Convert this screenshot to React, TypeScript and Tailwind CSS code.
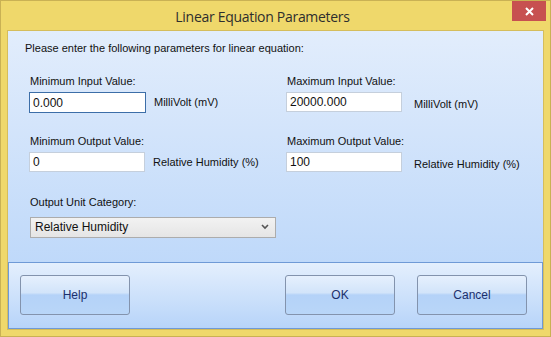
import React from "react";

const Field = ({ label, value, unit, focused, unitShift }: { label: string; value: string; unit: string; focused?: boolean; unitShift?: boolean }) => (
  <div className="flex flex-col">
    <span className="h-[13px] leading-[13px] pl-[1px]">{label}</span>
    <div className="mt-[4px] flex items-center">
      <div
        className={
          focused
            ? "w-[117px] h-[21px] bg-white border border-[#3c6ea8] flex items-center pl-[3px] text-[12px]"
            : "w-[116px] h-[20px] bg-white border border-[#c5cfdc] flex items-center pl-[3px] text-[12px]"
        }
      >
        {value}
      </div>
      <span className={unitShift ? "ml-[12px] mt-[4px]" : "ml-[8px]"}>{unit}</span>
    </div>
  </div>
);

const WinButton = ({ label }: { label: string }) => (
  <button className="w-[110px] h-[40px] rounded-[3px] border border-[#8393ad] bg-[linear-gradient(to_bottom,#e6f0fd_0%,#d2e4fa_44%,#b4d2f8_50%,#b9d6f8_100%)] text-[12px] text-[#1c2f6c]">
    {label}
  </button>
);

export default function App() {
  return (
    <div
      className="w-[551px] h-[337px] bg-[#efd86b] border border-[#c9b154] flex flex-col px-[6px] pb-[6px] text-[11px] text-[#111]"
      style={{ fontFamily: '"Liberation Sans", Arial, sans-serif' }}
    >
      {/* title bar */}
      <div className="relative h-[29px] flex items-center justify-center pr-[26px]">
        <span className="text-[14px] tracking-[-0.3px] text-[#2e2e2e] mt-[1px]" style={{ fontFamily: '"Open Sans", sans-serif' }}>
          Linear Equation Parameters
        </span>
        <div className="absolute top-0 right-[-2px] w-[34px] h-[20px] bg-[#c75050] flex items-center justify-center">
          <svg width="9" height="9" viewBox="0 0 9 9">
            <path d="M1 1 L8 8 M8 1 L1 8" stroke="#fff" strokeWidth="2" />
          </svg>
        </div>
      </div>

      {/* client */}
      <div className="flex-1 border border-[#d5bd5c] bg-[linear-gradient(to_bottom,#e2edfc,#b5d3f9)] flex flex-col">
        <div className="flex-1 flex flex-col">
          <div className="mt-[11px] ml-[17px] h-[13px] leading-[13px]">Please enter the following parameters for linear equation:</div>

          <div className="mt-[20px] grid grid-cols-[256px_1fr] pl-[21px]">
            <Field label="Minimum Input Value:" value="0.000" unit="MilliVolt (mV)" focused />
            <div className="ml-[1px]">
              <Field label="Maximum Input Value:" value="20000.000" unit="MilliVolt (mV)" unitShift />
            </div>
          </div>

          <div className="mt-[22px] grid grid-cols-[256px_1fr] pl-[21px]">
            <Field label="Minimum Output Value:" value="0" unit="Relative Humidity (%)" />
            <div className="ml-[1px]">
              <Field label="Maximum Output Value:" value="100" unit="Relative Humidity (%)" unitShift />
            </div>
          </div>

          <div className="mt-[23px] pl-[22px] flex flex-col">
            <span className="h-[13px] leading-[13px]">Output Unit Category:</span>
            <div className="mt-[8px] w-[246px] h-[21px] border border-[#acacac] bg-[linear-gradient(to_bottom,#f2f2f2,#e5e5e5)] flex items-center justify-between pl-[4px] pr-[6px] text-[12px]">
              <span>Relative Humidity</span>
              <svg width="8" height="6" viewBox="0 0 8 6">
                <path d="M1 1 L4 4 L7 1" stroke="#555" strokeWidth="1.6" fill="none" />
              </svg>
            </div>
          </div>
        </div>

        {/* button panel */}
        <div className="h-[67px] border border-[#6f9ad6] bg-[linear-gradient(to_bottom,#e4effd,#b7d4f9)] flex items-start pt-[12px] pl-[11px] pr-[15px]">
          <WinButton label="Help" />
          <div className="flex-1" />
          <div className="flex gap-[22px]">
            <WinButton label="OK" />
            <WinButton label="Cancel" />
          </div>
        </div>
      </div>
    </div>
  );
}
